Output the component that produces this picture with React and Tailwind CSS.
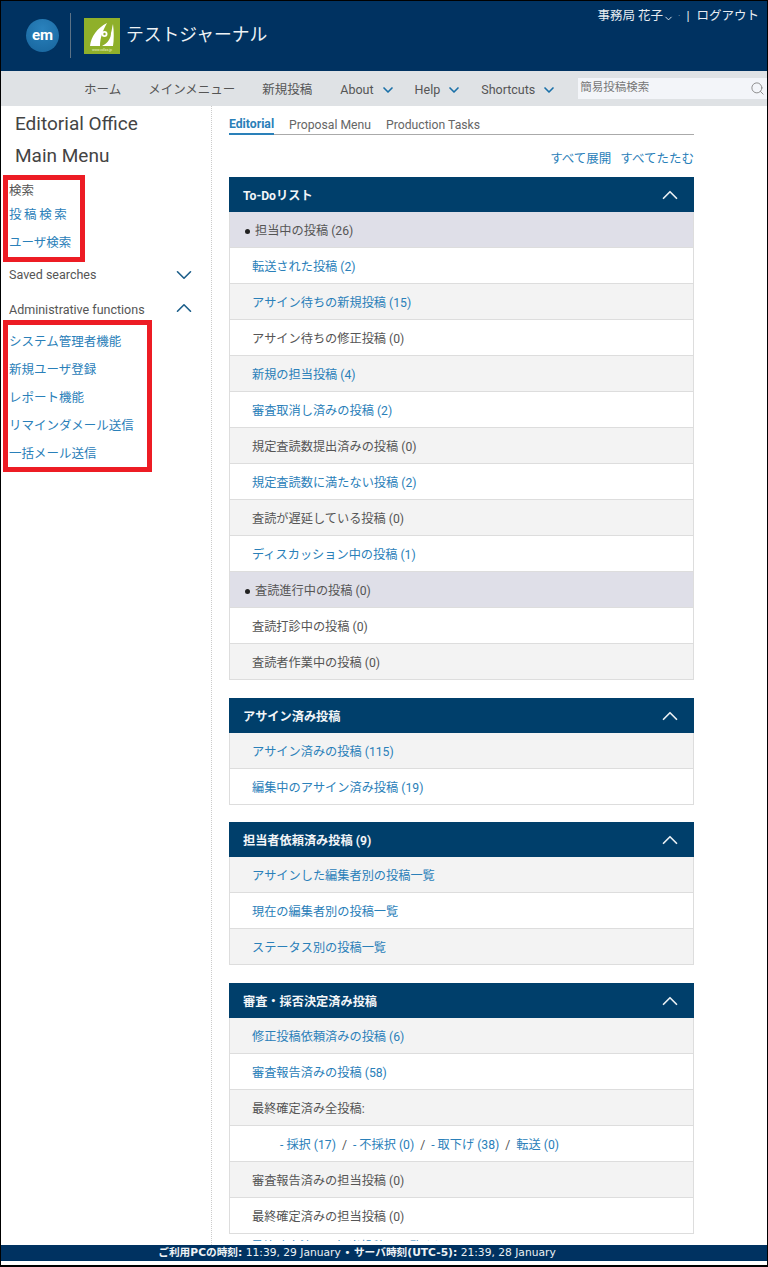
import { ChevronDown, ChevronUp, Search } from "lucide-react";

const font = "font-['Roboto','Noto_Sans_CJK_JP',sans-serif]";

const panels = [
  {
    title: "To-Doリスト",
    gap: "mb-[18px]",
    rows: [
      { text: "担当中の投稿 (26)", group: true },
      { text: "転送された投稿 (2)", link: true },
      { text: "アサイン待ちの新規投稿 (15)", link: true },
      { text: "アサイン待ちの修正投稿 (0)" },
      { text: "新規の担当投稿 (4)", link: true },
      { text: "審査取消し済みの投稿 (2)", link: true },
      { text: "規定査読数提出済みの投稿 (0)" },
      { text: "規定査読数に満たない投稿 (2)", link: true },
      { text: "査読が遅延している投稿 (0)" },
      { text: "ディスカッション中の投稿 (1)", link: true },
      { text: "査読進行中の投稿 (0)", group: true },
      { text: "査読打診中の投稿 (0)" },
      { text: "査読者作業中の投稿 (0)" },
    ],
  },
  {
    title: "アサイン済み投稿",
    gap: "mb-[17px]",
    rows: [
      { text: "アサイン済みの投稿 (115)", link: true },
      { text: "編集中のアサイン済み投稿 (19)", link: true },
    ],
  },
  {
    title: "担当者依頼済み投稿 (9)",
    gap: "mb-[18px]",
    rows: [
      { text: "アサインした編集者別の投稿一覧", link: true },
      { text: "現在の編集者別の投稿一覧", link: true },
      { text: "ステータス別の投稿一覧", link: true },
    ],
  },
  {
    title: "審査・採否決定済み投稿",
    gap: "",
    rows: [
      { text: "修正投稿依頼済みの投稿 (6)", link: true },
      { text: "審査報告済みの投稿 (58)", link: true },
      { text: "最終確定済み全投稿:" },
      { split: ["- 採択 (17)", "- 不採択 (0)", "- 取下げ (38)", "転送 (0)"] },
      { text: "審査報告済みの担当投稿 (0)" },
      { text: "最終確定済みの担当投稿 (0)" },
    ],
  },
];

const adminLinks = ["システム管理者機能", "新規ユーザ登録", "レポート機能", "リマインダメール送信", "一括メール送信"];

function Logo() {
  return (
    <svg width="36" height="36" viewBox="0 0 36 36" className="shrink-0">
      <rect width="36" height="36" fill="#8fb02a" />
      <path d="M6 28C7 19 13 10 23 5C19 12 16 20 16 28Z" fill="#fff" />
      <path d="M29 6C30 14 30 22 29 28L18 28C24 25 27 20 27 15C28 12 28 9 29 6Z" fill="#fff" />
      <circle cx="20.5" cy="16" r="3" fill="#fff" />
      <circle cx="20.5" cy="16" r="1.2" fill="#8fb02a" />
      <text x="18" y="33" textAnchor="middle" fontSize="3.4" fill="#e8f0c8" fontFamily="Roboto">www.cdlas.jp</text>
    </svg>
  );
}

function NavMenu({ label }) {
  return (
    <div className="flex items-center gap-[6px] text-[#555]">
      <span>{label}</span>
      <ChevronDown size={16} strokeWidth={2.5} className="text-[#1a70a8]" />
    </div>
  );
}

function Row({ row, index }) {
  const stripe = index % 2 === 0 ? "bg-[#f3f3f3]" : "bg-white";
  if (row.split) {
    return (
      <div className={`flex h-9 items-center gap-[6px] border-b border-[#ddd] pl-[50px] pt-[3px] text-[#2a80b9] ${stripe}`}>
        {row.split.map((item, i) => (
          <span key={item} className="flex gap-[6px]">
            {i > 0 && <span className="text-[#555]">/</span>}
            {item}
          </span>
        ))}
      </div>
    );
  }
  if (row.group) {
    return (
      <div className="flex h-9 items-center gap-[5px] border-b border-[#ddd] bg-[#dfdfe8] pl-[15px] pt-[3px] text-[#555]">
        <span className="h-[5px] w-[5px] rounded-full bg-[#222]" />
        {row.text}
      </div>
    );
  }
  return (
    <div className={`flex h-9 items-center border-b border-[#ddd] pl-[22px] pt-[3px] ${row.link ? "text-[#2a80b9]" : "text-[#555]"} ${stripe}`}>
      {row.text}
    </div>
  );
}

function Panel({ panel }) {
  return (
    <section className={`${panel.gap} shrink-0`}>
      <div className="flex h-[35px] items-center justify-between bg-[#003f6b] pl-[14px] pr-[11px] pt-1 font-bold text-[#f2f5f8]">
        <span>{panel.title}</span>
        <ChevronUp size={26} strokeWidth={1.6} className="-my-2 -mt-3 text-[#e8eef2]" />
      </div>
      <div className="border-x border-[#ddd]">
        {panel.rows.map((row, i) => (
          <Row key={i} row={row} index={i} />
        ))}
      </div>
    </section>
  );
}

export default function App() {
  return (
    <div className={`relative flex h-[1267px] w-[768px] flex-col overflow-hidden border border-b-2 border-black bg-white text-[12.2px] ${font}`}>
      <header className="flex h-[70px] shrink-0 items-start justify-between bg-[#003261] text-white">
        <div className="flex items-center pl-[25px] pt-3">
          <div className="flex h-[33px] w-[33px] items-center justify-center rounded-full bg-[radial-gradient(circle_at_50%_30%,#2a82bd,#17649c)] text-[15px] font-bold">em</div>
          <div className="ml-[11px] h-[45px] w-px bg-[#5c7286]" />
          <div className="ml-[13px]"><Logo /></div>
          <span className="ml-[6px] text-[17.8px] text-[#eef2f5]">テストジャーナル</span>
        </div>
        <div className="flex items-center pr-2 pt-[6px] text-[12.5px] text-[#e8edf2]">
          <span>事務局 花子</span>
          <ChevronDown size={11} className="mt-1" />
          <span className="ml-1 text-[9px] text-[#8fa3b6]">·</span>
          <span className="ml-[6px] mr-[7px]">|</span>
          <span>ログアウト</span>
        </div>
      </header>

      <nav className="flex h-[35px] shrink-0 items-center bg-[#dfe2e5] pl-[83px] pt-[3px] text-[12.5px] text-[#555]">
        <span>ホーム</span>
        <span className="ml-[27px]">メインメニュー</span>
        <span className="ml-[27px]">新規投稿</span>
        <div className="ml-7 flex gap-[19px]">
          <NavMenu label="About" />
          <NavMenu label="Help" />
          <NavMenu label="Shortcuts" />
        </div>
        <div className="-mt-[3px] ml-[21px] flex h-[21px] flex-1 items-center justify-between bg-[#f3f5f9] pl-[2px] pr-[2px] text-[11.5px] text-[#777]">
          <span className="-mt-[1px]">簡易投稿検索</span>
          <Search size={15} strokeWidth={1.5} className="text-[#888]" />
        </div>
      </nav>

      <div className="flex min-h-0 flex-1">
        <aside className="w-[211px] shrink-0 border-r border-dotted border-[#ccc] text-[12.5px] text-[#555]">
          <h2 className="pl-[14px] pt-[6px] text-[19px] leading-[24px] text-[#444]">Editorial Office</h2>
          <h2 className="pl-[14px] pt-[8px] text-[19px] leading-[24px] text-[#444]">Main Menu</h2>
          <div className="pl-[8px] pt-[14px]">
            <p className="leading-[18px]">検索</p>
            <p className="pt-[6px] leading-[18px] tracking-[2.6px] text-[#2a80b9]">投稿検索</p>
            <p className="pt-[10px] leading-[18px] text-[#2a80b9]">ユーザ検索</p>
          </div>
          <div className="flex items-center justify-between pl-[8px] pr-[14px] pt-[14px]">
            <span>Saved searches</span>
            <ChevronDown size={26} strokeWidth={1.5} className="-my-1 text-[#1d5f8a]" />
          </div>
          <div className="flex items-center justify-between pl-[8px] pr-[14px] pt-[16px]">
            <span>Administrative functions</span>
            <ChevronUp size={26} strokeWidth={1.5} className="-my-1 -mt-2 text-[#1d5f8a]" />
          </div>
          <div className="flex flex-col gap-[10px] pl-[8px] pt-[13px] text-[#2a80b9]">
            {adminLinks.map((item) => (
              <span key={item} className="leading-[18px]">{item}</span>
            ))}
          </div>
        </aside>

        <main className="flex min-w-0 flex-1 flex-col overflow-hidden pb-1 pl-[17px] pr-[73px]">
          <div className="flex h-[29px] shrink-0 items-end gap-[15px] border-b border-[#aaa]">
            <span className="-mb-px border-b-2 border-[#2a80b9] pb-[1px] font-bold leading-[16px] text-[#2a80b9]">Editorial</span>
            <span className="pb-[1px] leading-[16px] text-[#666]">Proposal Menu</span>
            <span className="pb-[1px] leading-[16px] text-[#666]">Production Tasks</span>
          </div>
          <div className="flex h-[42px] shrink-0 items-center justify-end gap-[9px] pt-[6px] text-[12.5px] text-[#2a80b9]">
            <span>すべて展開</span>
            <span>すべてたたむ</span>
          </div>
          <div className="flex min-h-0 flex-1 flex-col overflow-hidden">
            {panels.map((panel) => (
              <Panel key={panel.title} panel={panel} />
            ))}
            {/* next row, cut off by the scroll area */}
            <div className="h-9 shrink-0 pl-[22px] pt-[5px] leading-[16px] text-[#2a80b9]">
              最終確定済みの担当投稿の一覧 (0)
            </div>
          </div>
        </main>
      </div>

      <footer className="mb-[4px] flex h-4 shrink-0 items-center justify-center whitespace-nowrap bg-[#003261] pr-[54px] pt-[1px] font-['DejaVu_Sans','Noto_Sans_CJK_JP',sans-serif] text-[10.7px] leading-none text-[#eef2f5]">
        <span><b>ご利用PCの時刻:</b> 11:39, 29 January • <b>サーバ時刻(UTC-5):</b> 21:39, 28 January</span>
      </footer>

      {/* red annotation boxes */}
      <div className="absolute left-[2px] top-[174px] h-[87px] w-[82px] border-[5px] border-[#ed1c24]" />
      <div className="absolute left-[2px] top-[319px] h-[152px] w-[149px] border-[5px] border-[#ed1c24]" />
    </div>
  );
}
